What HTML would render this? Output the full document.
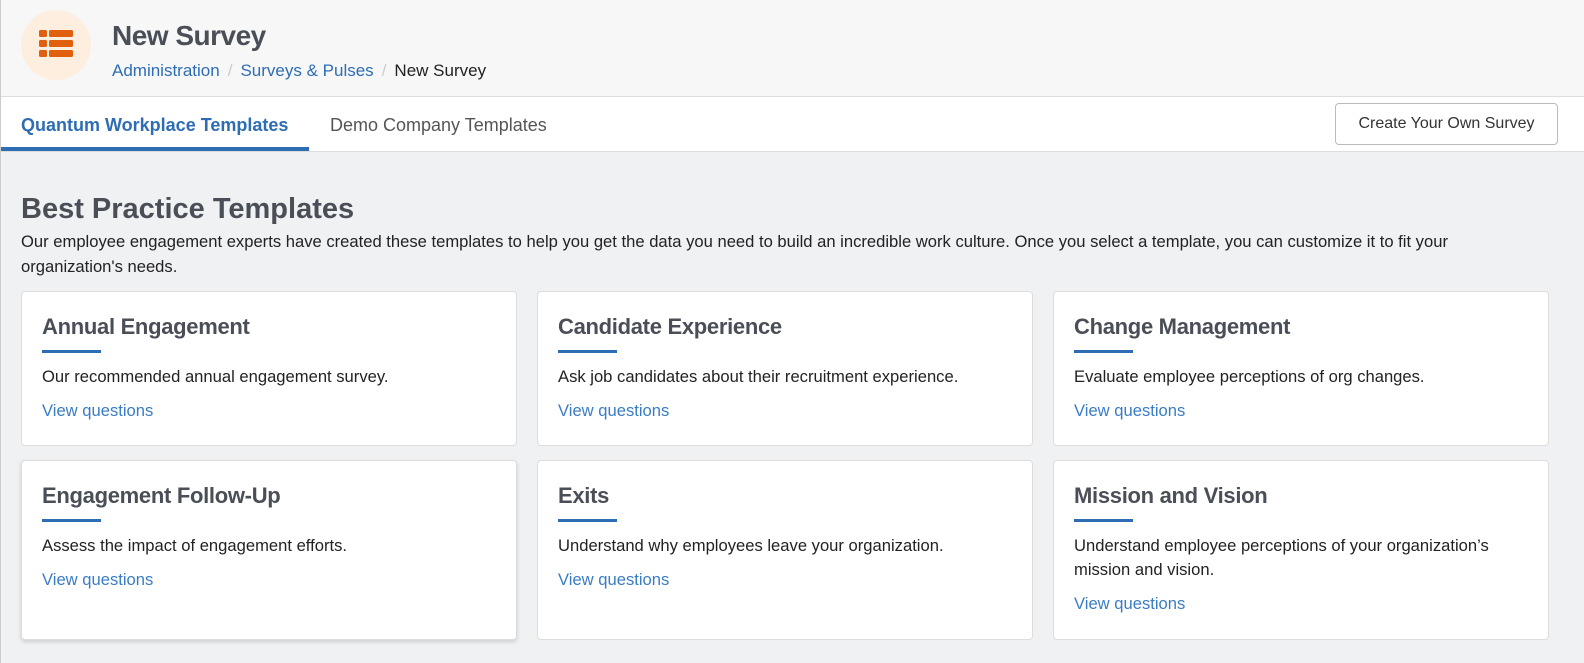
<!DOCTYPE html>
<html><head><style>
*{box-sizing:border-box;margin:0;padding:0}
body{width:1584px;height:663px;overflow:hidden;background:#f0f1f3;font-family:"Liberation Sans",sans-serif;position:relative;border-left:1px solid #ccc}
.hdr{position:absolute;left:0;top:0;width:1584px;height:97px;background:#f7f7f7;border-bottom:1px solid #ddd}
.circ{position:absolute;left:20px;top:10px;width:70px;height:70px;border-radius:50%;background:#fdeee0}
.title{position:absolute;left:111px;top:20px;font-size:28px;color:#4a4f57;font-weight:bold;letter-spacing:-0.5px}
.bc{position:absolute;left:111px;top:61px;font-size:17px;color:#2e6db4}
.bc .s{color:#ccc;margin:0 8px}.bc .c{color:#222}
.tabs{position:absolute;left:0;top:97px;width:1584px;height:55px;background:#fff;border-bottom:1px solid #ddd}
.tab{position:absolute;top:18px;font-size:18px}
.btn{position:absolute;left:1334px;top:6px;width:223px;height:42px;border:1px solid #bbb;border-radius:4px;font-size:16px;color:#333;text-align:center;line-height:40px;background:#fff}
h1{position:absolute;left:20px;top:193px;font-size:29px;color:#4a4f57}
.intro{position:absolute;left:20px;top:229px;width:1530px;font-size:16.6px;line-height:25px;color:#222}
.card{position:absolute;width:496px;background:#fff;border:1px solid #ddd;border-radius:4px;padding:0 20px}
.card h3{margin-top:22px;font-size:22px;color:#4a4f57;font-weight:bold;letter-spacing:-0.3px}
.bar{width:59px;height:3px;background:#2e6db4;margin-top:10px}
.card p{margin-top:12px;font-size:16.6px;line-height:24px;color:#222}
.card a{display:block;margin-top:12px;font-size:16.6px;color:#3a7cc4;text-decoration:none}
</style></head><body>
<div class="hdr">
<div class="circ"><svg width="70" height="70" viewBox="0 0 70 70"><g fill="#e06010"><rect x="18" y="20" width="8" height="7" rx="1.5"/><rect x="28" y="20" width="24" height="7" rx="1.5"/><rect x="18" y="30" width="8" height="7" rx="1.5"/><rect x="28" y="30" width="24" height="7" rx="1.5"/><rect x="18" y="40" width="8" height="7" rx="1.5"/><rect x="28" y="40" width="24" height="7" rx="1.5"/></g></svg></div>
<div class="title">New Survey</div>
<div class="bc">Administration<span class="s">/</span>Surveys &amp; Pulses<span class="s">/</span><span class="c">New Survey</span></div>
</div>
<div class="tabs">
<div class="tab" style="left:20px;color:#2e6db4;font-weight:bold">Quantum Workplace Templates</div>
<div style="position:absolute;left:0;top:50px;width:308px;height:4px;background:#2e6db4"></div>
<div class="tab" style="left:329px;color:#555">Demo Company Templates</div>
<div class="btn">Create Your Own Survey</div>
</div>
<h1>Best Practice Templates</h1>
<div class="intro">Our employee engagement experts have created these templates to help you get the data you need to build an incredible work culture. Once you select a template, you can customize it to fit your organization's needs.</div>
<div class="card" style="left:20px;top:291px;height:155px"><h3>Annual Engagement</h3><div class="bar"></div><p>Our recommended annual engagement survey.</p><a>View questions</a></div>
<div class="card" style="left:536px;top:291px;height:155px"><h3>Candidate Experience</h3><div class="bar"></div><p>Ask job candidates about their recruitment experience.</p><a>View questions</a></div>
<div class="card" style="left:1052px;top:291px;height:155px"><h3>Change Management</h3><div class="bar"></div><p>Evaluate employee perceptions of org changes.</p><a>View questions</a></div>
<div class="card" style="left:20px;top:460px;height:180px;box-shadow:0 2px 4px rgba(0,0,0,.15)"><h3>Engagement Follow-Up</h3><div class="bar"></div><p>Assess the impact of engagement efforts.</p><a>View questions</a></div>
<div class="card" style="left:536px;top:460px;height:180px"><h3>Exits</h3><div class="bar"></div><p>Understand why employees leave your organization.</p><a>View questions</a></div>
<div class="card" style="left:1052px;top:460px;height:180px"><h3>Mission and Vision</h3><div class="bar"></div><p>Understand employee perceptions of your organization’s mission and vision.</p><a>View questions</a></div>
</body></html>
